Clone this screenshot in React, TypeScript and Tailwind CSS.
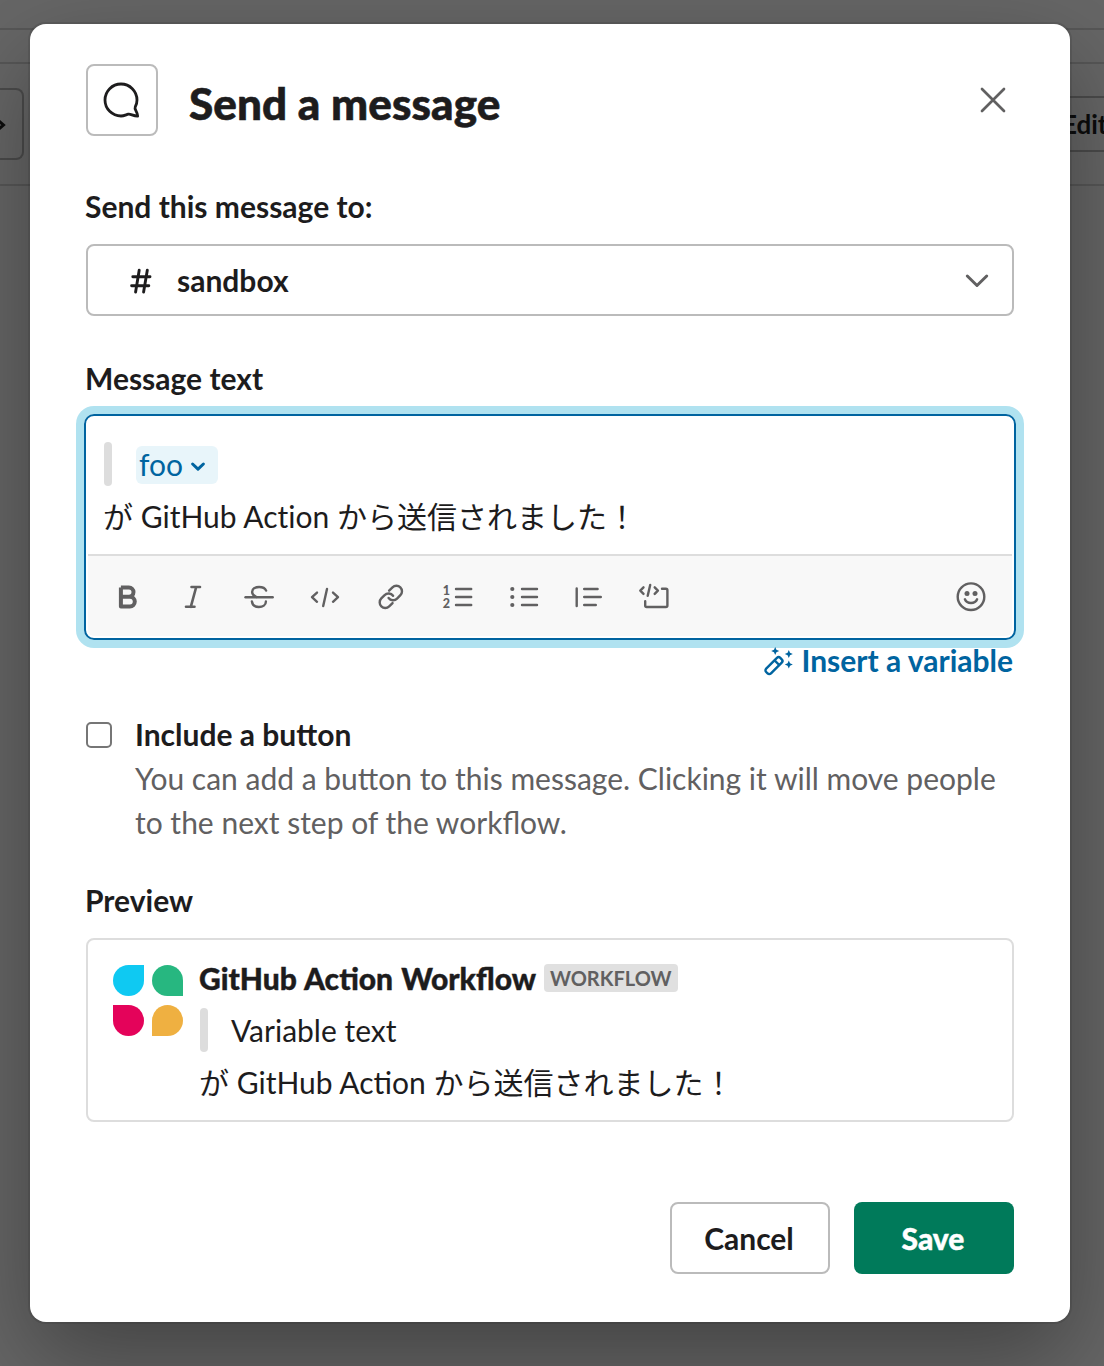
import { useState } from "react";
import type { ReactNode } from "react";

const LABEL = "text-[30px] leading-[44px] font-bold text-[#1d1c1d]";

function ToolIcon({ label, children }: { label: string; children: ReactNode }) {
  return (
    <button type="button" aria-label={label} className="flex h-9 w-[66px] items-center justify-center text-[#616061]">
      <svg
        width="36"
        height="36"
        viewBox="0 0 36 36"
        fill="none"
        stroke="currentColor"
        strokeWidth="2.4"
        strokeLinecap="round"
        strokeLinejoin="round"
      >
        {children}
      </svg>
    </button>
  );
}

function Toolbar() {
  return (
    <div className="mx-0.5 mb-0.5 flex h-20 items-center justify-between rounded-b-[6px] bg-[#f8f8f8] px-1.5">
      <div className="flex">
        <ToolIcon label="Bold">
          <path d="M11.900 9.500v19h9a4.900 4.900 0 0 0 0-9.800h-9M11.900 9.500h8a4.600 4.600 0 0 1 0 9.200" strokeWidth="4" strokeLinecap="butt" />
        </ToolIcon>
        <ToolIcon label="Italic">
          <path d="M16.5 9h8.5M11 28.8h8.5M21.2 9l-5.4 19.8" strokeWidth="2.6" />
        </ToolIcon>
        <ToolIcon label="Strikethrough">
          <g transform="translate(-.5 0)">
            <path d="M5 19.2h27.2" />
            <path d="M25.6 12.6C24.6 10.2 22 9 18.6 9c-4 0-7 1.8-7 4.9 0 2.3 1.6 3.8 4.4 5.1" />
            <path d="M11.4 23.4c.4 3.6 3.2 5.6 7 5.6s7-2 7-5.6" />
          </g>
        </ToolIcon>
        <ToolIcon label="Code">
          <path d="M10 14.6l-5 4.6 5 4.6M26 14.6l5 4.6-5 4.6M20 11l-3.8 17" />
        </ToolIcon>
        <ToolIcon label="Link">
          <g transform="translate(4.4 5.4) scale(1.12)" strokeWidth="2.15">
            <path d="M10 13a5 5 0 0 0 7.54.54l3-3a5 5 0 0 0-7.07-7.07l-3 3" />
            <path d="M14 11a5 5 0 0 0-7.54-.54l-3 3a5 5 0 0 0 7.07 7.07l3-3" />
          </g>
        </ToolIcon>
        <ToolIcon label="Ordered list">
          <path d="M17 11h15.2M17 19h15.2M17 27h15.2" />
          <text x="3.7" y="16.700" fill="currentColor" stroke="none" fontSize="12.5" fontWeight="900">1</text>
          <text x="3.7" y="30" fill="currentColor" stroke="none" fontSize="12.5" fontWeight="900">2</text>
        </ToolIcon>
        <ToolIcon label="Bulleted list">
          <path d="M17 11h15M17 19h15M17 27h15" />
          <g fill="currentColor" stroke="none">
            <circle cx="7.3" cy="11" r="2.1" />
            <circle cx="7.3" cy="19" r="2.1" />
            <circle cx="7.3" cy="27" r="2.1" />
          </g>
        </ToolIcon>
        <ToolIcon label="Blockquote">
          <path d="M5.7 10.5v17.5M13.2 11h13.4M13.2 19h16.6M13.2 27h11.6" />
        </ToolIcon>
        <ToolIcon label="Code block">
          <path d="M6.5 9.3l-3.2 3.3 3.2 3.3M17.7 9.3l3.2 3.3-3.2 3.3M13.2 7l-2.5 10.8" />
          <path d="M25 10.7h3.9a1.5 1.5 0 0 1 1.5 1.5v15.3a1.5 1.5 0 0 1-1.5 1.5H9.7a1.5 1.5 0 0 1-1.5-1.5v-4.3" />
        </ToolIcon>
      </div>
      <div className="mr-1">
        <button type="button" aria-label="Emoji" className="flex h-9 w-[62px] items-center justify-center text-[#616061]">
          <svg width="36" height="36" viewBox="0 0 36 36" fill="none" stroke="currentColor" strokeWidth="2.4" strokeLinecap="round">
            <circle cx="18" cy="18.7" r="13.3" />
            <circle cx="14" cy="15.4" r="2.5" fill="currentColor" stroke="none" />
            <circle cx="22" cy="15.4" r="2.5" fill="currentColor" stroke="none" />
            <path d="M11.9 21.3c1 2.5 3.3 3.7 6.1 3.7s5.1-1.2 6.1-3.7" />
          </svg>
        </button>
      </div>
    </div>
  );
}

// Page that sits behind the dialog
function Backdrop() {
  return (
    <div className="h-full overflow-hidden bg-[#666]">
      <div className="h-[30px] border-b-2 border-[#575757]" />
      <div className="h-[34px] border-b-2 border-[#575757]" />
      <div className="flex h-[122px] items-center justify-between border-b-2 border-[#575757]">
        <div className="flex h-[72px] w-6 items-center rounded-r-lg border-2 border-l-0 border-[#4b4b4b]">
          <svg width="8" height="14" viewBox="0 0 8 14" fill="none" stroke="#0c0c0c" strokeWidth="3" strokeLinecap="round">
            <path d="M-1 4l4.5 4L-1 12" />
          </svg>
        </div>
        <div className="flex h-14 w-[60px] items-center border-y-2 border-[#4b4b4b] pl-[18px] text-[26px] font-bold text-[#0c0c0c]">
          Edit
        </div>
      </div>
    </div>
  );
}

export default function App() {
  const [includeButton, setIncludeButton] = useState(false);

  return (
    <div className="relative h-[1366px] w-[1104px] overflow-hidden font-[Lato,'Noto_Sans_CJK_JP',sans-serif] text-[#1d1c1d]">
      <Backdrop />

      <div className="absolute inset-0 flex items-start justify-start pt-6 pl-[30px]">
        <div
          role="dialog"
          className="flex h-[1298px] w-[1040px] flex-col rounded-2xl bg-white px-14 pt-10 shadow-[0_0_0_2px_rgba(29,28,29,0.13),0_36px_96px_0_rgba(0,0,0,0.35)]"
        >
          <header className="flex h-[72px] items-center">
            <div className="flex h-[72px] w-[72px] items-center justify-center rounded-lg border-2 border-[#bbb]">
              <svg width="40" height="40" viewBox="0 0 40 40" fill="none" stroke="#1d1c1d" strokeWidth="2.8" strokeLinejoin="round">
                <path d="M26.3 34.2C28.500 33.7 30.500 35.600 35.700 36.200 35.600 31.500 32 29.500 33.200 27 34.400 25 35 22.600 35 20A16 16 0 1 0 19 36C21.800 36 24 34.800 26.300 34.200Z" />
              </svg>
            </div>
            <h1 className="mt-1.5 ml-[31px] text-[44px] leading-[56px] font-black tracking-[0.1px] [-webkit-text-stroke:0.6px_#1d1c1d]">
              Send a message
            </h1>
            <button type="button" aria-label="Close" className="mr-1.5 ml-auto">
              <svg width="30" height="30" viewBox="0 0 30 30" fill="none" stroke="#616061" strokeWidth="2.7" strokeLinecap="round">
                <path d="M4 4l22 22M26 4L4 26" />
              </svg>
            </button>
          </header>

          <div className={`mt-12 -ml-px ${LABEL}`}>Send this message to:</div>
          <button type="button" className="mt-4 flex h-[72px] items-center rounded-lg border-2 border-[#bbb] pr-5 pl-10">
            <svg width="28" height="30" viewBox="0 0 28 30" fill="none" stroke="#1d1c1d" strokeWidth="2.9" strokeLinecap="round">
              <path d="M11.200 5.200L7.600 27M19.300 5.200L15.600 27M4.800 11.800h17.200M3.600 20.700h17.200" />
            </svg>
            <span className="ml-[21px] text-[30px] leading-[44px] font-bold">sandbox</span>
            <svg className="ml-auto" width="30" height="30" viewBox="0 0 30 30" fill="none" stroke="#616061" strokeWidth="3" strokeLinecap="round" strokeLinejoin="round">
              <path d="M5.300 11l9.700 9.500 9.700-9.500" />
            </svg>
          </button>

          <div className={`mt-10 -ml-px ${LABEL}`}>Message text</div>
          <div className="-mx-0.5 mt-3.5 flex h-[226px] flex-col rounded-[10px] border-2 border-[#0064a0] shadow-[0_0_0_8px_#b0e2f0]">
            <div className="flex h-[138px] flex-col gap-2 px-[18px] pt-[26px] text-[30px] leading-[44px]">
              <div className="flex h-11 items-center">
                <div className="h-11 w-2 rounded-full bg-[#ddd]" />
                <div className="mt-0.5 ml-6 flex h-[38px] w-[82px] items-center rounded-[6px] bg-[#e8f5fa] pl-[3px] text-[#0064a0]">
                  <span className="-mt-0.5">foo</span>
                  <svg className="ml-[5px]" width="20" height="20" viewBox="0 0 20 20" fill="none" stroke="currentColor" strokeWidth="3" strokeLinecap="round" strokeLinejoin="round">
                    <path d="M4.600 9l5.400 5.200L15.400 9" />
                  </svg>
                </div>
              </div>
              <p className="-ml-px whitespace-nowrap [font-variant-ligatures:none]">が GitHub Action から送信されました！</p>
            </div>
            <div className="mx-0.5 h-0.5 shrink-0 bg-[#ddd]" />
            <Toolbar />
          </div>

          <button type="button" className="-mt-0.5 mr-px flex h-11 items-center self-end text-[#0064a0]">
            <svg className="mt-0.5" width="32" height="32" viewBox="0 0 32 32" fill="none" stroke="currentColor" strokeWidth="2.4" strokeLinejoin="round">
              <g transform="rotate(-45 12.300 20.300)">
                <rect x="1.800" y="16.900" width="20" height="6.800" rx="2.400" />
                <path d="M16 17v6.600" />
              </g>
              <g fill="currentColor" stroke="none">
                <path d="M13.200 2l1.200 2.800 2.800 1.200-2.800 1.200-1.200 2.800-1.200-2.800L9.200 6l2.800-1.200z" />
                <path d="M26.800 5l1.200 2.800 2.800 1.200-2.800 1.200-1.200 2.800-1.200-2.800L22.800 9l2.800-1.200z" />
                <path d="M26.800 15.500l1.200 2.800 2.800 1.200-2.800 1.200-1.200 2.800-1.200-2.800-2.800-1.200 2.800-1.200z" />
              </g>
            </svg>
            <span className="ml-2 text-[30px] leading-[44px] font-bold">Insert a variable</span>
          </button>

          <label className="mt-[30px] flex items-start">
            <input
              type="checkbox"
              checked={includeButton}
              onChange={(e) => setIncludeButton(e.target.checked)}
              className="mt-2.5 h-[26px] w-[26px] appearance-none rounded-[5px] border-2 border-[#767676] bg-white"
            />
            <div className="ml-[23px] whitespace-nowrap">
              <div className={LABEL}>Include a button</div>
              <p className="text-[30px] leading-[44px] text-[#616061]">
                You can add a button to this message. Clicking it will move people
                <br />
                to the next step of the workflow.
              </p>
            </div>
          </label>

          <div className={`mt-[34px] -ml-px ${LABEL}`}>Preview</div>
          <div className="mt-4 flex h-[184px] rounded-lg border-2 border-[#ddd] pt-4 pl-6">
            <div className="mt-[9px] ml-px grid h-[71px] w-[70px] shrink-0 grid-cols-2 gap-2">
              <div className="h-[31px] rounded-full rounded-tr-none bg-[#0fc9f2]" />
              <div className="h-[31px] rounded-full rounded-br-none bg-[#27b780]" />
              <div className="h-[31px] rounded-full rounded-tl-none bg-[#e4035a]" />
              <div className="h-[31px] rounded-full rounded-bl-none bg-[#efb041]" />
            </div>
            <div className="ml-4 whitespace-nowrap text-[30px] leading-[44px]">
              <div className="flex h-11 items-center">
                <span className="font-black [-webkit-text-stroke:0.4px_#1d1c1d] [word-spacing:1px]">GitHub Action Workflow</span>
                <span className="ml-2 flex h-7 items-center rounded-[4px] bg-[#e0e0e0] px-1.5 text-[20px] font-bold text-[#616061]">
                  WORKFLOW
                </span>
              </div>
              <div className="mt-2 flex h-11 items-center">
                <div className="ml-px h-11 w-2 rounded-full bg-[#ddd]" />
                <span className="ml-[23px]">Variable text</span>
              </div>
              <p className="mt-2">が GitHub Action から送信されました！</p>
            </div>
          </div>

          <footer className="mt-20 flex justify-end gap-6">
            <button type="button" className="h-[72px] w-40 rounded-lg border-2 border-[#bbb] pr-0.5 text-[30px] font-bold">
              Cancel
            </button>
            <button type="button" className="h-[72px] w-40 rounded-lg bg-[#007a5a] pr-0.5 text-[30px] font-black text-white [-webkit-text-stroke:0.4px_#fff]">
              Save
            </button>
          </footer>
        </div>
      </div>
    </div>
  );
}
